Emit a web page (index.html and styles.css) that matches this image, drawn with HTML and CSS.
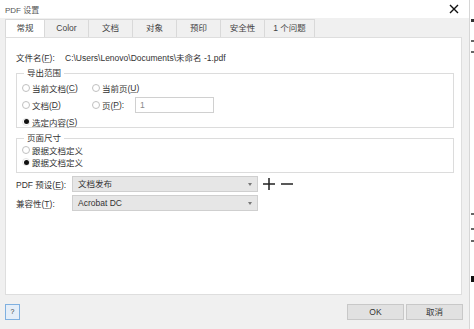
FILE: index.html
```html
<!DOCTYPE html>
<html lang="zh-CN">
<head>
  <meta charset="UTF-8" />
  <title>PDF 设置</title>
  <link rel="stylesheet" href="styles.css">
</head>
<body>
  <div class="screen">
    <div class="dialog">
      <div class="titlebar">
        <span class="title">PDF 设置</span>
        <svg class="close" width="10" height="10" viewBox="0 0 10 10">
          <path d="M1 1 L9 9 M9 1 L1 9" stroke="#111" stroke-width="1.4" />
        </svg>
      </div>

      <div class="tabs">
        <div class="tab active">常规</div>
        <div class="tab">Color</div>
        <div class="tab">文档</div>
        <div class="tab">对象</div>
        <div class="tab">预印</div>
        <div class="tab">安全性</div>
        <div class="tab wide">1 个问题</div>
      </div>

      <div class="panel">
        <div class="file-row">
          <span class="label">文件名(<u>F</u>):</span>
          <span class="path">C:\Users\Lenovo\Documents\未命名 -1.pdf</span>
        </div>

        <fieldset class="group">
          <legend>导出范围</legend>
          <div class="radio-row">
            <label class="radio col1"><i></i>当前文档(<u>C</u>)</label>
            <label class="radio"><i></i>当前页(<u>U</u>)</label>
          </div>
          <div class="radio-row">
            <label class="radio col1"><i></i>文档(<u>D</u>)</label>
            <label class="radio col2"><i></i>页(<u>P</u>):</label>
            <div class="input">1</div>
          </div>
          <div class="radio-row">
            <label class="radio checked"><i></i>选定内容(<u>S</u>)</label>
          </div>
        </fieldset>

        <fieldset class="group small">
          <legend>页面尺寸</legend>
          <div class="radio-row tight">
            <label class="radio"><i></i>跟据文档定义</label>
          </div>
          <div class="radio-row tight">
            <label class="radio checked"><i></i>跟据文档定义</label>
          </div>
        </fieldset>

        <div class="field-row">
          <span class="label">PDF 预设(<u>E</u>):</span>
          <div class="select">文档发布<span class="arrow"></span></div>
          <svg class="op" width="14" height="14" viewBox="0 0 14 14">
            <path d="M1 7 H13 M7 1 V13" stroke="#222" stroke-width="1.5" />
          </svg>
          <svg class="op" width="14" height="14" viewBox="0 0 14 14">
            <path d="M1 7 H13" stroke="#222" stroke-width="1.5" />
          </svg>
        </div>
        <div class="field-row">
          <span class="label">兼容性(<u>T</u>):</span>
          <div class="select">Acrobat DC<span class="arrow"></span></div>
        </div>
      </div>

      <div class="footer">
        <div class="help">?</div>
        <div class="buttons">
          <div class="btn">OK</div>
          <div class="btn">取消</div>
        </div>
      </div>
    </div>

    <div class="edge">
      <span class="mark m1"></span>
      <span class="mark m2"></span>
      <span class="mark m3"></span>
      <span class="mark m4"></span>
      <span class="mark m5"></span>
      <span class="mark m6"></span>
      <span class="mark big"></span>
    </div>
  </div>
</body>
</html>
```

FILE: styles.css
```css
* {
  margin: 0;
  padding: 0;
  box-sizing: border-box;
}

body {
  font-family: "Liberation Sans", "Noto Sans CJK SC", sans-serif;
  font-size: 8.5px;
  color: #333;
  background: #fff;
}

u {
  text-decoration: underline;
  text-decoration-color: #999;
}

.screen {
  display: flex;
  width: 474px;
  height: 329px;
}

.dialog {
  width: 469px;
  height: 329px;
  background: #f0f0f0;
  display: flex;
  flex-direction: column;
}

.titlebar {
  height: 18px;
  background: #fff;
  display: flex;
  align-items: center;
  justify-content: space-between;
  padding: 0 10px 0 5px;
}

.title {
  font-size: 8px;
  color: #555;
}

.tabs {
  display: flex;
  padding: 1px 0 0 5px;
  height: 19px;
}

.tab {
  width: 44px;
  height: 18px;
  line-height: 17px;
  text-align: center;
  border: 1px solid #d9d9d9;
  border-left: none;
  border-bottom: none;
  background: #f0f0f0;
  color: #444;
}

.tab.active {
  background: #fff;
  border-left: 1px solid #d9d9d9;
  width: 40px;
}

.tab.wide {
  width: 50px;
}

.panel {
  margin: 0 7px 0 5px;
  height: 258px;
  background: #fff;
  border: 1px solid #dedede;
  padding: 11px 7px 0 10px;
}

.file-row {
  display: flex;
  height: 16px;
  align-items: center;
  margin-bottom: 3px;
}

.file-row .label {
  width: 49px;
}

.group {
  border: 1px solid #dcdcdc;
  padding: 0 0 4px 5px;
  margin-bottom: 5px;
  height: 60px;
}

.group.small {
  height: 40px;
  margin-bottom: 3px;
}

.group legend {
  margin-left: 2px;
  padding: 0 3px;
  line-height: 11px;
}

.radio-row {
  display: flex;
  align-items: center;
  height: 17px;
}

.radio-row.tight {
  height: 12px;
}

.radio {
  display: flex;
  align-items: center;
}

.radio i {
  width: 8px;
  height: 8px;
  border: 1px solid #c0c0c0;
  border-radius: 50%;
  margin-right: 2px;
  display: flex;
  align-items: center;
  justify-content: center;
}

.radio.checked i {
  border-color: #e4e4e4;
}

.radio.checked i::after {
  content: "";
  width: 5px;
  height: 5px;
  border-radius: 50%;
  background: #111;
}

.col1 {
  width: 70px;
}

.col2 {
  width: 43px;
}

.input {
  width: 79px;
  height: 16px;
  border: 1px solid #d0d0d0;
  padding-left: 4px;
  line-height: 14px;
  color: #888;
}

.field-row {
  display: flex;
  align-items: center;
  height: 16px;
  margin-top: 3px;
}

.field-row .label {
  width: 56px;
}

.select {
  width: 186px;
  height: 16px;
  background: #e6e6e6;
  border: 1px solid #cfcfcf;
  padding-left: 5px;
  line-height: 14px;
  position: relative;
}

.arrow {
  position: absolute;
  right: 5px;
  top: 6px;
  border-left: 2px solid transparent;
  border-right: 2px solid transparent;
  border-top: 3px solid #777;
}

.op {
  margin-left: 4px;
}

.footer {
  flex: 1;
  display: flex;
  align-items: center;
  justify-content: space-between;
  padding: 0 6px 0 5px;
}

.help {
  width: 15px;
  height: 16px;
  border: 1px solid #7fb0e0;
  background: #e5eef8;
  text-align: center;
  line-height: 14px;
  font-size: 7px;
}

.buttons {
  display: flex;
  gap: 2px;
}

.btn {
  width: 57px;
  height: 16px;
  background: #e1e1e1;
  border: 1px solid #c8c8c8;
  text-align: center;
  line-height: 14px;
}

.edge {
  width: 5px;
  height: 329px;
  border-left: 1px solid #d6d6d6;
  background: #fff;
  position: relative;
}

.mark {
  position: absolute;
  left: 1px;
  width: 3px;
  height: 2px;
  background: #666;
}

.m1 { top: 19px; height: 3px; background: #333; }
.m2 { top: 40px; }
.m3 { top: 51px; }
.m4 { top: 213px; }
.m5 { top: 228px; }
.m6 { top: 240px; }
.big { top: 276px; height: 6px; background: #111; }
```
